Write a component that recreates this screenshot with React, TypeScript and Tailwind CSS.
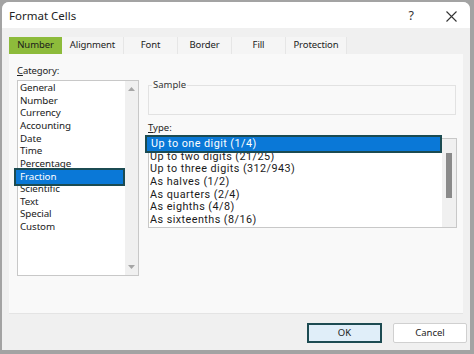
import React from "react";

const font = { fontFamily: '"Noto Sans", "Open Sans", sans-serif' };
const typeFont = { fontFamily: 'Roboto, "Noto Sans", sans-serif' };

const categories = [
  "General",
  "Number",
  "Currency",
  "Accounting",
  "Date",
  "Time",
  "Percentage",
  "Fraction",
  "Scientific",
  "Text",
  "Special",
  "Custom",
];

const types = [
  "Up to one digit (1/4)",
  "Up to two digits (21/25)",
  "Up to three digits (312/943)",
  "As halves (1/2)",
  "As quarters (2/4)",
  "As eighths (4/8)",
  "As sixteenths (8/16)",
];

const tabs = [
  { label: "Number", w: "w-[53px]" },
  { label: "Alignment", w: "w-[62px]" },
  { label: "Font", w: "w-[54px]" },
  { label: "Border", w: "w-[54px]" },
  { label: "Fill", w: "w-[54px]" },
  { label: "Protection", w: "w-[61px]" },
];

export default function App() {
  return (
    <div
      className="w-[474px] h-[354px] bg-[#a3a3a3] pt-[2px] pl-[2px] pr-[4px] pb-[4px] overflow-hidden"
      style={font}
    >
      <div className="w-[468px] h-[348px] bg-[#f0f0f0] rounded-t-[7px] flex flex-col overflow-hidden text-[#1a1a1a]">
        {/* Title bar */}
        <div className="h-[26px] bg-white flex items-center pl-[7px] pr-[12px] shrink-0 pt-[2px]">
          <span className="text-[11.5px] text-[#222]">Format Cells</span>
          <span className="ml-auto text-[12.5px] text-[#333] mr-[32px]">?</span>
          <svg width="11" height="11" viewBox="0 0 11 11" className="mr-[1px]">
            <path d="M0.5 0.5L10.5 10.5M10.5 0.5L0.5 10.5" stroke="#333" strokeWidth="1.1" />
          </svg>
        </div>

        {/* Body */}
        <div className="flex-1 flex flex-col pl-[7px] pt-[9px]">
          {/* Tabs */}
          <div className="flex h-[17px]">
            {tabs.map((t, i) => (
              <div
                key={t.label}
                className={
                  t.w +
                  " h-[17px] flex items-center justify-center text-[9.5px] tracking-[-0.1px] " +
                  (i === 0
                    ? "bg-[#8dbb3b] text-[#1a1a1a]"
                    : "bg-[#f5f5f5] border-r border-[#e6e6e6] text-[#222]")
                }
              >
                {t.label}
              </div>
            ))}
          </div>

          {/* Content panel */}
          <div className="w-[454px] h-[260px] bg-[#f9f9f9] border-b border-[#e4e4e4] flex pl-[8px] pt-[10px]">
            {/* Category column */}
            <div className="flex flex-col w-[122px]">
              <div className="text-[9.5px] tracking-[-0.1px] leading-[14px] h-[16px] text-[#222]">
                <span className="underline underline-offset-1">C</span>ategory:
              </div>
              <div className="w-[122px] h-[196px] bg-white border border-[#c8c8c8] flex">
                <div className="flex-1 flex flex-col pt-[1px]">
                  {categories.map((c) =>
                    c === "Fraction" ? (
                      <div
                        key={c}
                        className="-ml-[4px] w-[111px] h-[18px] -my-[2.7px] shrink-0 border-2 border-[#1b4b52] bg-[#0a78d7] text-white text-[9.8px] tracking-[-0.1px] leading-[13px] pl-[4px] flex items-center relative"
                      >
                        {c}
                      </div>
                    ) : (
                      <div
                        key={c}
                        className="h-[12.65px] shrink-0 leading-[12.65px] text-[9.8px] tracking-[-0.1px] pl-[2px] text-[#1a1a1a] whitespace-nowrap"
                      >
                        {c}
                      </div>
                    )
                  )}
                </div>
                <div className="w-[16px] bg-[#f0f0f0] flex flex-col items-center justify-between py-[6px]">
                  <svg width="7" height="4" viewBox="0 0 7 4">
                    <path d="M0 4L3.5 0L7 4Z" fill="#a6a6a6" />
                  </svg>
                  <svg width="7" height="4" viewBox="0 0 7 4">
                    <path d="M0 0L3.5 4L7 0Z" fill="#a6a6a6" />
                  </svg>
                </div>
              </div>
            </div>

            {/* Right column */}
            <div className="flex flex-col ml-[9px] w-[309px]">
              <fieldset className="mt-[16px] h-[35px] w-[308px] border border-[#e2e2e2] px-[3px]">
                <legend className="text-[9.5px] leading-[10px] px-[1px] text-[#333]">Sample</legend>
              </fieldset>
              <div className="mt-[6px] text-[9.5px] leading-[14px] h-[17px] text-[#222]">
                <span className="underline underline-offset-1">T</span>ype:
              </div>
              <div className="w-[309px] h-[90px] bg-white border border-[#c8c8c8] flex" style={typeFont}>
                <div className="flex-1 flex flex-col">
                  {types.map((t, i) =>
                    i === 0 ? (
                      <div
                        key={t}
                        className="-ml-[4px] -mt-[4px] mb-[-2.4px] w-[297px] h-[18px] shrink-0 border-2 border-[#1b4b52] bg-[#0a78d7] text-white text-[10.8px] tracking-[0.45px] pl-[4px] flex items-center whitespace-nowrap relative"
                      >
                        {t}
                      </div>
                    ) : (
                      <div
                        key={t}
                        className="h-[12.7px] shrink-0 leading-[12.7px] text-[10.8px] tracking-[0.45px] pl-[1px] text-[#1a1a1a] whitespace-nowrap"
                      >
                        {t}
                      </div>
                    )
                  )}
                </div>
                <div className="w-[14px] bg-[#f0f0f0] flex flex-col items-center pt-[14px]">
                  <div className="w-[6px] h-[45px] bg-[#8a8a8a]" />
                </div>
              </div>
            </div>
          </div>

          {/* Buttons */}
          <div className="flex justify-end pr-[3px] pt-[9px] gap-[11px]">
            <div className="w-[75px] h-[20px] bg-[#e0eef9] border-2 border-[#1d4b52] flex items-center justify-center text-[9.5px] text-[#222]">
              OK
            </div>
            <div className="w-[74px] h-[20px] bg-white border border-[#d0d0d0] rounded-[2px] flex items-center justify-center text-[9.5px] text-[#222]">
              Cancel
            </div>
          </div>
        </div>
      </div>
    </div>
  );
}
